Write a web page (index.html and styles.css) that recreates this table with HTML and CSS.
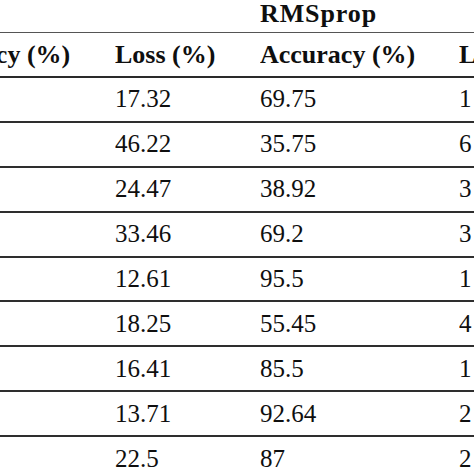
FILE: index.html
```html
<!DOCTYPE html>
<html>
<head>
<meta charset="utf-8">
<link rel="stylesheet" href="styles.css">
</head>
<body>
<div class="crop">
  <table class="results">
    <colgroup>
      <col class="c-acc1"><col class="c-loss"><col class="c-acc2"><col class="c-loss">
    </colgroup>
    <thead>
      <tr class="group">
        <th></th><th></th><th colspan="2">RMSprop</th>
      </tr>
      <tr class="heads">
        <th>Accuracy (%)</th><th>Loss (%)</th><th>Accuracy (%)</th><th>Loss (%)</th>
      </tr>
    </thead>
    <tbody>
      <tr><td></td><td>17.32</td><td>69.75</td><td>1</td></tr>
      <tr><td></td><td>46.22</td><td>35.75</td><td>6</td></tr>
      <tr><td></td><td>24.47</td><td>38.92</td><td>3</td></tr>
      <tr><td></td><td>33.46</td><td>69.2</td><td>3</td></tr>
      <tr><td></td><td>12.61</td><td>95.5</td><td>1</td></tr>
      <tr><td></td><td>18.25</td><td>55.45</td><td>4</td></tr>
      <tr><td></td><td>16.41</td><td>85.5</td><td>1</td></tr>
      <tr><td></td><td>13.71</td><td>92.64</td><td>2</td></tr>
      <tr><td></td><td>22.5</td><td>87</td><td>2</td></tr>
    </tbody>
  </table>
</div>
</body>
</html>
```
FILE: styles.css
```css
html, body {
  margin: 0;
  padding: 0;
  background: #ffffff;
}
.crop {
  width: 474px;
  height: 474px;
  overflow: hidden;
}
.results {
  margin-left: -85px;
  border-collapse: collapse;
  table-layout: fixed;
  width: 689px;
  font-family: "Liberation Serif", "Times New Roman", serif;
  font-size: 25px;
  color: #0f0f0f;
}
.c-acc1 { width: 200px; }
.c-acc2 { width: 199px; }
.c-loss { width: 145px; }
.results th,
.results td {
  padding: 0;
  text-align: left;
  white-space: nowrap;
  overflow: hidden;
  vertical-align: middle;
}
.results th {
  font-weight: bold;
  font-size: 26px;
}
.group th {
  height: 32px;
  vertical-align: top;
  line-height: 28px;
  letter-spacing: 0.9px;
  overflow: visible;
  border-bottom: 1.5px solid #555555;
}
.heads th {
  height: 43px;
  border-bottom: 2px solid #2a2a2a;
}
.results td {
  height: 42.9px;
  border-bottom: 2px solid #2e2e2e;
}
```
